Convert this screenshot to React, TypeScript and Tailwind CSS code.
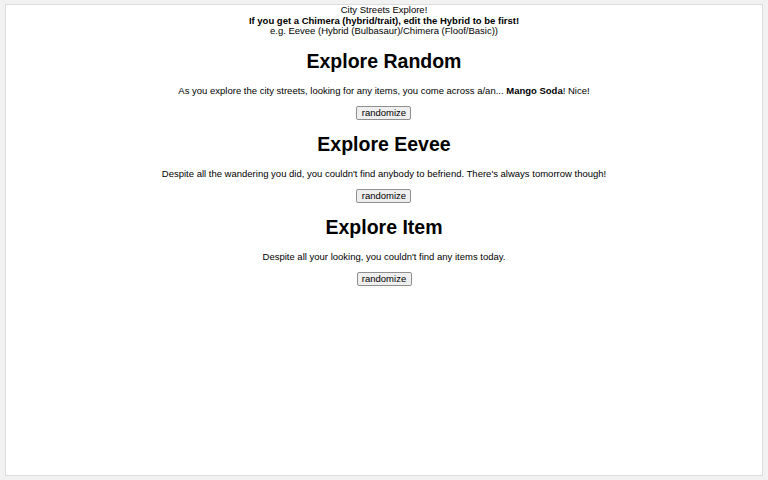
import React from "react";

const sections = [
  {
    title: "Explore Random",
    body: (
      <>
        As you explore the city streets, looking for any items, you come across a/an...{" "}
        <b>Mango Soda</b>! Nice!
      </>
    ),
  },
  {
    title: "Explore Eevee",
    body: (
      <>Despite all the wandering you did, you couldn't find anybody to befriend. There's always tomorrow though!</>
    ),
  },
  {
    title: "Explore Item",
    body: <>Despite all your looking, you couldn't find any items today.</>,
  },
];

export default function App() {
  return (
    <div
      className="w-[768px] h-[480px] bg-[#f2f2f2] pt-[4px] px-[5px] text-black"
      style={{ fontFamily: '"Liberation Sans", Arial, sans-serif' }}
    >
      <div className="h-[472px] bg-white border border-[#dcdcdc] flex flex-col items-center text-center">
        <div className="text-[9.5px] leading-[10.5px]">
          <div>City Streets Explore!</div>
          <div className="font-bold">If you get a Chimera (hybrid/trait), edit the Hybrid to be first!</div>
          <div>e.g. Eevee (Hybrid (Bulbasaur)/Chimera (Floof/Basic))</div>
        </div>
        {sections.map((s) => (
          <div key={s.title} className="flex flex-col items-center">
            <h2 className="mt-[12px] text-[19.5px] leading-[24px] font-bold">{s.title}</h2>
            <p className="mt-[12px] text-[9.5px] leading-[12px]">{s.body}</p>
            <button className="mt-[9px] h-[14px] w-[55px] text-[9.5px] leading-[12px] bg-[#efefef] border border-[#8f8f8f] rounded-[2px]">
              randomize
            </button>
          </div>
        ))}
      </div>
    </div>
  );
}
